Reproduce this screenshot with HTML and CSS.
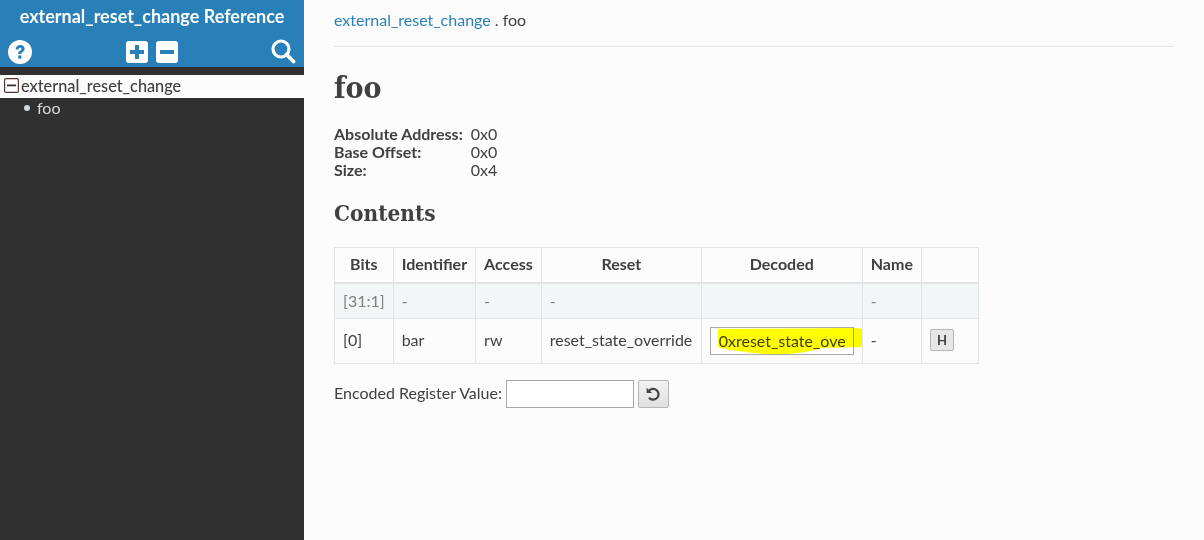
FILE: index.html
```html
<!DOCTYPE html>
<html lang="en">
<head>
    <meta charset="UTF-8">
    <title>external_reset_change Reference</title>
    <link rel="stylesheet" href="styles.css">
</head>
<body>
    <div class="layout">
        <nav class="sidebar">
            <div class="sidebar-head">
                <div class="sidebar-title">external_reset_change Reference</div>
                <div class="toolbar">
                    <svg class="tool-icon" width="24" height="24" viewBox="0 0 24 24">
                        <circle cx="12" cy="12" r="12" fill="#fff"/>
                        <path d="M7.6 9.4C7.9 6.6 9.7 5 12.2 5c2.6 0 4.4 1.6 4.4 3.8 0 1.7-.9 2.6-2.2 3.4-.9.6-1.1.9-1.1 1.8h-3c0-1.8.5-2.7 1.8-3.5 1-.6 1.4-1 1.4-1.6 0-.7-.6-1.2-1.4-1.2-.9 0-1.5.6-1.7 1.9z" fill="#2980b9"/>
                        <rect x="10.2" y="15.4" width="3.2" height="3.2" fill="#2980b9"/>
                    </svg>
                    <div class="tool-group">
                        <svg width="22" height="22" viewBox="0 0 22 22">
                            <rect width="22" height="22" rx="3" fill="#fff"/>
                            <path d="M9 4h4v5h5v4h-5v5H9v-5H4V9h5z" fill="#2980b9"/>
                        </svg>
                        <svg width="22" height="22" viewBox="0 0 22 22">
                            <rect width="22" height="22" rx="3" fill="#fff"/>
                            <rect x="4" y="9" width="14" height="4" fill="#2980b9"/>
                        </svg>
                    </div>
                    <svg class="tool-icon" width="25" height="25" viewBox="0 0 25 25">
                        <circle cx="10" cy="10" r="8" fill="none" stroke="#fff" stroke-width="3.2"/>
                        <path d="M15.5 15.5l7 7" stroke="#fff" stroke-width="3.8" stroke-linecap="round"/>
                    </svg>
                </div>
            </div>
            <div class="tree-root">
                <svg width="15" height="15" viewBox="0 0 15 15">
                    <rect x=".6" y=".6" width="13.8" height="13.8" rx="1.5" fill="#fff" stroke="#5a3535" stroke-width="1.2"/>
                    <rect x="3" y="6.5" width="9" height="1.8" fill="#333"/>
                </svg>
                <span>external_reset_change</span>
            </div>
            <div class="tree-leaf"><span class="dot"></span>foo</div>
        </nav>
        <main class="content">
            <div class="crumbs"><a href="#">external_reset_change</a> . foo</div>
            <hr class="rule">
            <h1>foo</h1>
            <table class="info">
                <tr><th>Absolute Address:</th><td>0x0</td></tr>
                <tr><th>Base Offset:</th><td>0x0</td></tr>
                <tr><th>Size:</th><td>0x4</td></tr>
            </table>
            <h2>Contents</h2>
            <table class="fields">
                <thead>
                    <tr>
                        <th>Bits</th>
                        <th>Identifier</th>
                        <th>Access</th>
                        <th class="col-reset">Reset</th>
                        <th>Decoded</th>
                        <th>Name</th>
                        <th class="col-action"></th>
                    </tr>
                </thead>
                <tbody>
                    <tr class="reserved">
                        <td class="muted">[31:1]</td>
                        <td>-</td>
                        <td>-</td>
                        <td>-</td>
                        <td></td>
                        <td>-</td>
                        <td></td>
                    </tr>
                    <tr>
                        <td>[0]</td>
                        <td>bar</td>
                        <td>rw</td>
                        <td>reset_state_override</td>
                        <td>
                            <div class="decoded">
                                <input class="decoded-input" type="text" value="0xreset_state_ove">
                                <svg class="marker" width="146" height="32" viewBox="0 0 146 32">
                                    <path d="M8 3L146 2L152 3V21L112 22Q95 27 78 28Q50 29 28 25Q12 23 8 21z" fill="#ffff00"/>
                                </svg>
                            </div>
                        </td>
                        <td>-</td>
                        <td><button class="btn-h">H</button></td>
                    </tr>
                </tbody>
            </table>
            <div class="encoded">
                <label for="encoded">Encoded Register Value:</label>
                <input id="encoded" class="encoded-input" type="text">
                <button class="btn-reset">
                    <svg width="16" height="16" viewBox="0 0 16 16">
                        <path d="M4.2 4.6A5.4 5.4 0 1 1 4 11.8" fill="none" stroke="#444" stroke-width="2.2"/>
                        <path d="M1.6 1.8L7.2 7H1.6z" fill="#444"/>
                    </svg>
                </button>
            </div>
        </main>
    </div>
</body>
</html>
```

FILE: styles.css
```css
* {
    box-sizing: border-box;
}

html,
body {
    height: 100%;
    margin: 0;
}

body {
    background-color: #fcfcfc;
    color: #404040;
    font-family: Lato, sans-serif;
    font-size: 16px;
    overflow: hidden;
}

.layout {
    display: flex;
    height: 540px;
}

.sidebar {
    width: 304px;
    flex-shrink: 0;
    background-color: #303030;
}

.sidebar-head {
    height: 67px;
    background-color: #2980b9;
    padding-top: 5px;
}

.sidebar-title {
    color: #fcfcfc;
    font-size: 18px;
    font-weight: 700;
    text-align: center;
    line-height: 22px;
}

.toolbar {
    display: flex;
    align-items: center;
    justify-content: space-between;
    padding: 12px 8px 0;
}

.tool-group {
    display: flex;
    gap: 8px;
}

.tool-group svg,
.tool-icon {
    display: block;
}

.tree-root {
    display: flex;
    align-items: center;
    gap: 2px;
    height: 23px;
    margin-top: 8px;
    padding-left: 4px;
    padding-bottom: 2px;
    background-color: #fcfcfc;
    color: #404040;
    font-size: 16.3px;
    font-weight: 500;
    line-height: 21px;
}

.tree-leaf {
    display: flex;
    align-items: center;
    height: 21px;
    padding-left: 24px;
    padding-bottom: 3px;
    color: #d9d9d9;
}

.dot {
    width: 6px;
    height: 6px;
    border-radius: 50%;
    background-color: #d0d8e0;
    margin-right: 7px;
    margin-top: 2px;
}

.content {
    flex: 1;
    padding: 0 30px;
}

.crumbs {
    padding-top: 9px;
    padding-bottom: 1px;
    line-height: 21px;
}

.crumbs a {
    color: #2980b9;
    text-decoration: none;
}

.rule {
    border: none;
    border-top: 1px solid #e1e4e5;
    margin: 15px 0 0;
}

h1,
h2 {
    font-family: "DejaVu Serif Condensed", "DejaVu Serif", serif;
    font-stretch: condensed;
    font-weight: 700;
    color: #404040;
    margin: 0;
}

h1 {
    font-size: 30px;
    line-height: 36px;
    margin-top: 23px;
}

h2 {
    font-size: 22.4px;
    line-height: 28px;
    margin-top: 20px;
}

.info {
    border-collapse: collapse;
    margin-top: 19px;
    line-height: 18px;
}

.info th {
    font-weight: 700;
    text-align: left;
    padding: 0 8px 0 0;
}

.info td {
    padding: 0;
}

.fields {
    border-collapse: collapse;
    margin-top: 20px;
    line-height: 24px;
}

.fields th,
.fields td {
    border: 1px solid #e1e4e5;
    padding: 5px 8px;
}

.fields th {
    font-weight: 700;
    text-align: center;
    border-bottom-width: 2px;
    padding-top: 4px;
    padding-bottom: 6px;
}

.fields td {
    padding-top: 7px;
    padding-bottom: 9px;
}

.col-reset {
    width: 160px;
}

.col-action {
    width: 57px;
}

.reserved td {
    background-color: #f3f6f6;
    color: #808080;
    padding-top: 5px;
    padding-bottom: 5px;
}

.decoded {
    position: relative;
    width: 144px;
    margin-top: 1px;
    margin-bottom: -1px;
}

.decoded-input {
    display: block;
    width: 144px;
    height: 28px;
    border: 1px solid #a9a9a9;
    background-color: #fff;
    color: #404040;
    font: 16px Lato, sans-serif;
    padding: 0 4px 2px 8px;
}

.marker {
    position: absolute;
    left: 0;
    top: -1px;
    overflow: visible;
    mix-blend-mode: multiply;
    pointer-events: none;
}

.btn-h {
    display: block;
    width: 24px;
    height: 22px;
    padding: 0;
    border: 1px solid #b5b5b5;
    border-radius: 2px;
    background-color: #e6e6e6;
    color: #404040;
    font: 700 13px Lato, sans-serif;
}

.encoded {
    display: flex;
    align-items: center;
    gap: 4px;
    margin-top: 16px;
}

.encoded label {
    padding-bottom: 3px;
}

.encoded-input {
    width: 128px;
    height: 28px;
    border: 1px solid #a9a9a9;
    background-color: #fff;
}

.btn-reset {
    display: flex;
    align-items: center;
    justify-content: center;
    width: 31px;
    height: 28px;
    padding: 0;
    border: 1px solid #b5b5b5;
    border-radius: 2px;
    background: linear-gradient(#f2f2f2, #e0e0e0);
}
```
